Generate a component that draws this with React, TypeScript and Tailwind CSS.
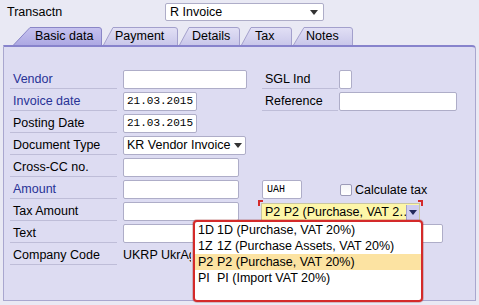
import React from 'react'

const sans = "font-['Liberation_Sans','Arial',sans-serif]"
const mono = "font-['Liberation_Mono','Courier_New',monospace]"

type TabDef = { label: string; w: number; slant: number; pl: number; active?: boolean }

const tabs: TabDef[] = [
  { label: 'Basic data', w: 90, slant: 17, pl: 22, active: true },
  { label: 'Payment', w: 76, slant: 10, pl: 12 },
  { label: 'Details', w: 62, slant: 10, pl: 13 },
  { label: 'Tax', w: 52, slant: 10, pl: 14 },
  { label: 'Notes', w: 61, slant: 11, pl: 13 },
]

function Tab({ t }: { t: TabDef }) {
  const h = 19
  const d = `M0.5,${h} L${t.slant},1.5 L${t.w - 4},1.5 Q${t.w - 1.5},1.5 ${t.w - 1.5},4 L${t.w - 1.5},${h}`
  const gid = t.active ? 'tabActive' : 'tabIdle'
  return (
    <div className="relative h-[19px] shrink-0" style={{ width: t.w }}>
      <svg className="absolute inset-0" width={t.w} height={h}>
        <defs>
          <linearGradient id="tabActive" x1="0" y1="0" x2="0" y2="1">
            <stop offset="0" stopColor="#c6c2ef" />
            <stop offset="1" stopColor="#ada9e3" />
          </linearGradient>
          <linearGradient id="tabIdle" x1="0" y1="0" x2="0" y2="1">
            <stop offset="0" stopColor="#e2e0f5" />
            <stop offset="1" stopColor="#c9c7ea" />
          </linearGradient>
        </defs>
        <path d={d} fill={`url(#${gid})`} stroke={t.active ? '#8a86c6' : '#a3a0cc'} strokeWidth="1" />
      </svg>
      <span className="relative block text-[12.5px] leading-[19px] pt-[1px] text-black" style={{ paddingLeft: t.pl }}>
        {t.label}
      </span>
    </div>
  )
}

function Arrow({ color = '#333' }: { color?: string }) {
  return (
    <svg width="8" height="5" viewBox="0 0 8 5">
      <path d="M0,0 L8,0 L4,5 Z" fill={color} />
    </svg>
  )
}

function Input({ w, children, className = '' }: { w: number; children?: React.ReactNode; className?: string }) {
  return (
    <div
      className={`h-[19px] bg-white border border-[#aeadc8] rounded-[2px] flex items-center pl-[3px] shrink-0 ${className}`}
      style={{ width: w }}
    >
      {children}
    </div>
  )
}

function Label({ text, blue, w = 107 }: { text: string; blue?: boolean; w?: number }) {
  return (
    <div
      className={`h-[19px] border-b border-[#bebdd8] pl-[3px] flex items-center text-[12.5px] shrink-0 ${blue ? 'text-[#283296]' : 'text-black'}`}
      style={{ width: w }}
    >
      {text}
    </div>
  )
}

function Row({ children }: { children: React.ReactNode }) {
  return <div className="h-[22px] flex items-start pl-[6px]">{children}</div>
}

const taxCodes = [
  { code: '1D', text: '1D (Purchase, VAT 20%)' },
  { code: '1Z', text: '1Z (Purchase Assets, VAT 20%)' },
  { code: 'P2', text: 'P2 (Purchase, VAT 20%)', selected: true },
  { code: 'PI', text: 'PI (Import VAT 20%)' },
]

export default function App() {
  return (
    <div className={`relative w-[479px] h-[305px] overflow-hidden bg-[#e9e9f4] ${sans}`}>
      {/* transaction */}
      <div className="flex items-center h-[18px] mt-[3px] pl-[7px]">
        <div className="w-[158px] text-[12.5px] text-black">Transactn</div>
        <div className="w-[159px] h-[18px] bg-white border border-[#aeadc8] rounded-[2px] flex items-center justify-between pl-[4px] pr-[5px] text-[12.5px]">
          <span>R Invoice</span>
          <Arrow />
        </div>
      </div>

      {/* tabs */}
      <div className="flex mt-[5px] pl-[13px] h-[19px]">
        {tabs.map(t => (
          <Tab key={t.label} t={t} />
        ))}
      </div>

      {/* panel */}
      <div className="ml-[3px] w-[473px] h-[256px] bg-[#dddcf2] border border-[#a9a7cf] border-t-2 border-t-[#8783cc] rounded-tr-[4px] pt-[23px]">
        <Row>
          <Label text="Vendor" blue />
          <Input w={124} className="ml-[6px]" />
          <div className="ml-[15px]"><Label text="SGL Ind" w={76} /></div>
          <Input w={13} className="ml-[1px]" />
        </Row>
        <Row>
          <Label text="Invoice date" blue />
          <Input w={74} className={`ml-[6px] ${mono} text-[11px]`}>21.03.2015</Input>
          <div className="ml-[65px]"><Label text="Reference" w={76} /></div>
          <Input w={118} className="ml-[1px]" />
        </Row>
        <Row>
          <Label text="Posting Date" />
          <Input w={74} className={`ml-[6px] ${mono} text-[11px]`}>21.03.2015</Input>
        </Row>
        <Row>
          <Label text="Document Type" />
          <Input w={123} className="ml-[6px] text-[12.5px] justify-between pr-[3px]">
            <span>KR Vendor Invoice</span>
            <Arrow />
          </Input>
        </Row>
        <Row>
          <Label text="Cross-CC no." />
          <Input w={116} className="ml-[6px]" />
        </Row>
        <Row>
          <Label text="Amount" blue />
          <Input w={116} className="ml-[6px]" />
          <Input w={40} className={`ml-[23px] ${mono} text-[10px] pl-[4px]`}>UAH</Input>
          <div className="ml-[38px] mt-[4px] w-[12px] h-[12px] bg-gradient-to-b from-[#f4f4f8] to-white border border-[#9c9bb8] rounded-[2px]" />
          <span className="ml-[3px] text-[12.5px] leading-[19px] mt-[1px]">Calculate tax</span>
        </Row>
        <Row>
          <Label text="Tax Amount" />
          <Input w={116} className="ml-[6px]" />
          <div className="relative ml-[22px] mt-[1px]">
            <div className="w-[159px] h-[18px] bg-[#fdf6a8] border border-[#c9c6a0] flex items-center pl-[3px] text-[12.5px] overflow-hidden">
              <span className="flex-1 whitespace-nowrap overflow-hidden">P2 P2 (Purchase, VAT 2…</span>
              <div className="w-[13px] h-[15px] bg-[#cfcdf0] border-l border-[#a3a1d0] flex items-center justify-center shrink-0">
                <Arrow color="#22285c" />
              </div>
            </div>
            <div className="absolute -left-[3px] -top-[3px] w-[5px] h-[6px] border-l-2 border-t-2 border-[#d42a2a]" />
            <div className="absolute -right-[3px] -top-[3px] w-[5px] h-[6px] border-r-2 border-t-2 border-[#d42a2a]" />
          </div>
        </Row>
        <Row>
          <Label text="Text" />
          <Input w={320} className="ml-[6px]" />
        </Row>
        <Row>
          <Label text="Company Code" />
          <span className="ml-[6px] w-[68px] overflow-hidden text-[12.5px] leading-[19px] whitespace-nowrap">UKRP UkrAgro</span>
        </Row>
      </div>

      {/* tax code value list */}
      <div className="absolute left-[193px] top-[220px] w-[230px] h-[82px] bg-white border-2 border-[#d42a2a] rounded-[4px] shadow-[0_0_0_1px_rgba(150,40,40,0.25)]">
        {taxCodes.map(c => (
          <div
            key={c.code}
            className={`h-[16px] flex items-center pl-[3px] text-[12.5px] whitespace-nowrap ${c.selected ? 'bg-[#fce3a2]' : ''}`}
          >
            <span className="w-[19px]">{c.code}</span>
            <span>{c.text}</span>
          </div>
        ))}
      </div>
    </div>
  )
}
